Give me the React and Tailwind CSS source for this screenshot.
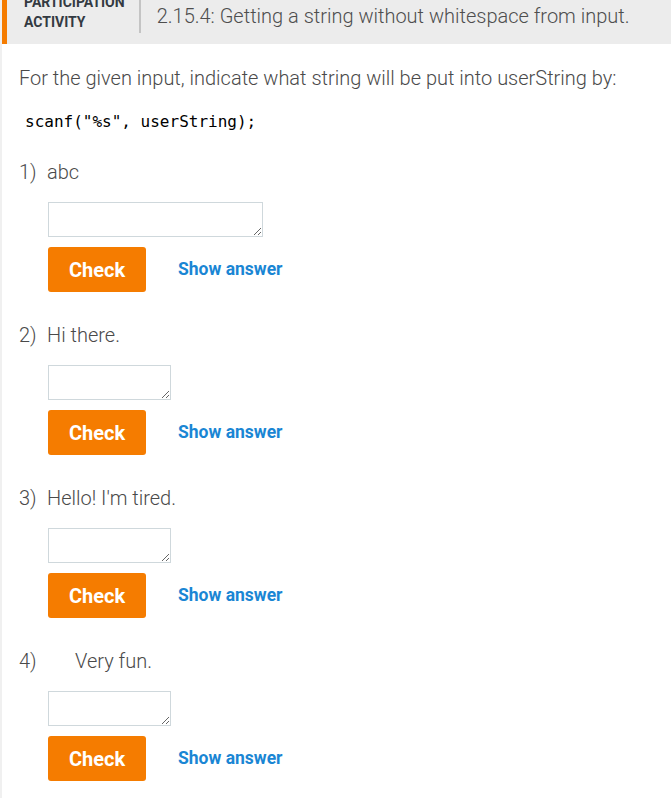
import { useState } from "react";

const questions = [
  { id: 1, text: "abc", wide: true },
  { id: 2, text: "Hi there." },
  { id: 3, text: "Hello! I'm tired." },
  { id: 4, text: "Very fun.", indent: true },
];

function Question({ q }) {
  let [value, setValue] = useState("");

  return (
    <div className="mb-[29px]">
      <div className="flex items-center h-[28px] text-[20px] font-light text-[#4a4a4a]">
        <span className="w-[28px]">{q.id})</span>
        <span className={q.indent ? "pl-[28px]" : ""}>{q.text}</span>
      </div>
      <div className="ml-[29px] mt-[16px]">
        <textarea
          value={value}
          onChange={(e) => setValue(e.target.value)}
          className={
            "block h-[35px] border border-[#cfd8dc] bg-white outline-none " +
            (q.wide ? "w-[215px]" : "w-[123px]")
          }
        />
        <div className="mt-[10px] flex items-center">
          <button className="h-[45px] w-[98px] rounded-[3px] bg-[#f57c00] text-[20px] font-bold text-white">
            Check
          </button>
          <button className="ml-[32px] text-[17.5px] font-bold text-[#1a86d4]">
            Show answer
          </button>
        </div>
      </div>
    </div>
  );
}

export default function App() {
  return (
    <div
      className="min-h-screen bg-white border-l-[2px] border-[#f0f0f0]"
      style={{ fontFamily: "Roboto, 'Liberation Sans', sans-serif" }}
    >
      <div className="flex h-[44px] overflow-hidden bg-[#ececec] border-l-[5px] border-[#f57c00]">
        <div className="flex">
          <div className="-mt-[8px] pl-[17px] pr-[14px] text-[14px] font-bold leading-[20px] text-[#333a42]">
            PARTICIPATION
            <br />
            ACTIVITY
          </div>
          <div className="h-[33px] w-[2px] bg-[#c4c4c4]"></div>
        </div>
        <div className="pl-[16px] pt-[4px] text-[20px] font-light leading-[24px] text-[#4e4e4e]">
          2.15.4: Getting a string without whitespace from input.
        </div>
      </div>

      <div className="pl-[17px] pt-[22px]">
        <p className="text-[20px] font-light leading-[24px] text-[#4a4a4a]">
          For the given input, indicate what string will be put into userString by:
        </p>
        <pre
          className="mt-[20px] ml-[6px] text-[16px] leading-[24px] text-black"
          style={{ fontFamily: "'DejaVu Sans Mono', monospace" }}
        >
          scanf("%s", userString);
        </pre>
        <div className="mt-[24px]">
          {questions.map((q) => (
            <Question key={q.id} q={q} />
          ))}
        </div>
      </div>
    </div>
  );
}
